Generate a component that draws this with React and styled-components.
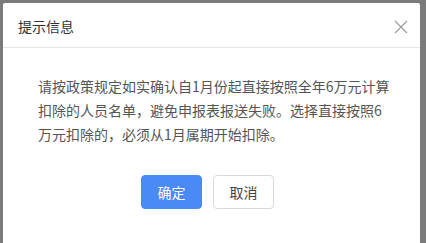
import React from "react";
import styled, { createGlobalStyle } from "styled-components";

const Global = createGlobalStyle`
  html, body { margin: 0; padding: 0; background: #7b7b7b; overflow: hidden; }
  body { font-family: "Noto Sans CJK SC", "Noto Sans", sans-serif; }
`;

const Dialog = styled.div`
  margin: 3px 6px 0 3px;
  height: 240px;
  background: #ffffff;
  border-radius: 2px 2px 0 0;
  display: flex;
  flex-direction: column;
`;

const Header = styled.div`
  height: 45px;
  box-sizing: border-box;
  border-bottom: 1px solid #e6e6e6;
  display: flex;
  align-items: center;
  justify-content: space-between;
  padding: 0 12px 0 15px;
`;

const Title = styled.span`
  font-size: 14px;
  color: #333333;
  margin-top: 1px;
`;

const Close = styled.button`
  border: 0;
  background: none;
  padding: 0;
  width: 14px;
  height: 14px;
  margin-top: 4px;
  cursor: pointer;
  display: flex;
`;

const Body = styled.div`
  padding: 26px 26px 0 35px;
  font-size: 14px;
  line-height: 24px;
  color: #555555;
`;

const Footer = styled.div`
  display: flex;
  justify-content: center;
  gap: 11px;
  margin-top: 29px;
  padding-right: 8px;
`;

const Button = styled.button`
  width: 61px;
  height: 34px;
  box-sizing: border-box;
  border-radius: 4px;
  font-family: inherit;
  font-size: 14px;
  border: 1px solid ${(p) => (p.$primary ? "#4a8af4" : "#d9d9d9")};
  background: ${(p) => (p.$primary ? "#4a8af4" : "#ffffff")};
  color: ${(p) => (p.$primary ? "#ffffff" : "#444444")};
  padding: 0;
`;

export default function App() {
  return (
    <>
      <Global />
      <Dialog>
        <Header>
          <Title>提示信息</Title>
          <Close aria-label="close">
            <svg width="14" height="14" viewBox="0 0 14 14">
              <path d="M1 1L13 13M13 1L1 13" stroke="#9a9a9a" strokeWidth="1.1" />
            </svg>
          </Close>
        </Header>
        <Body>
          请按政策规定如实确认自1月份起直接按照全年6万元计算扣除的人员名单，避免申报表报送失败。选择直接按照6万元扣除的，必须从1月属期开始扣除。
        </Body>
        <Footer>
          <Button $primary>确定</Button>
          <Button>取消</Button>
        </Footer>
      </Dialog>
    </>
  );
}
